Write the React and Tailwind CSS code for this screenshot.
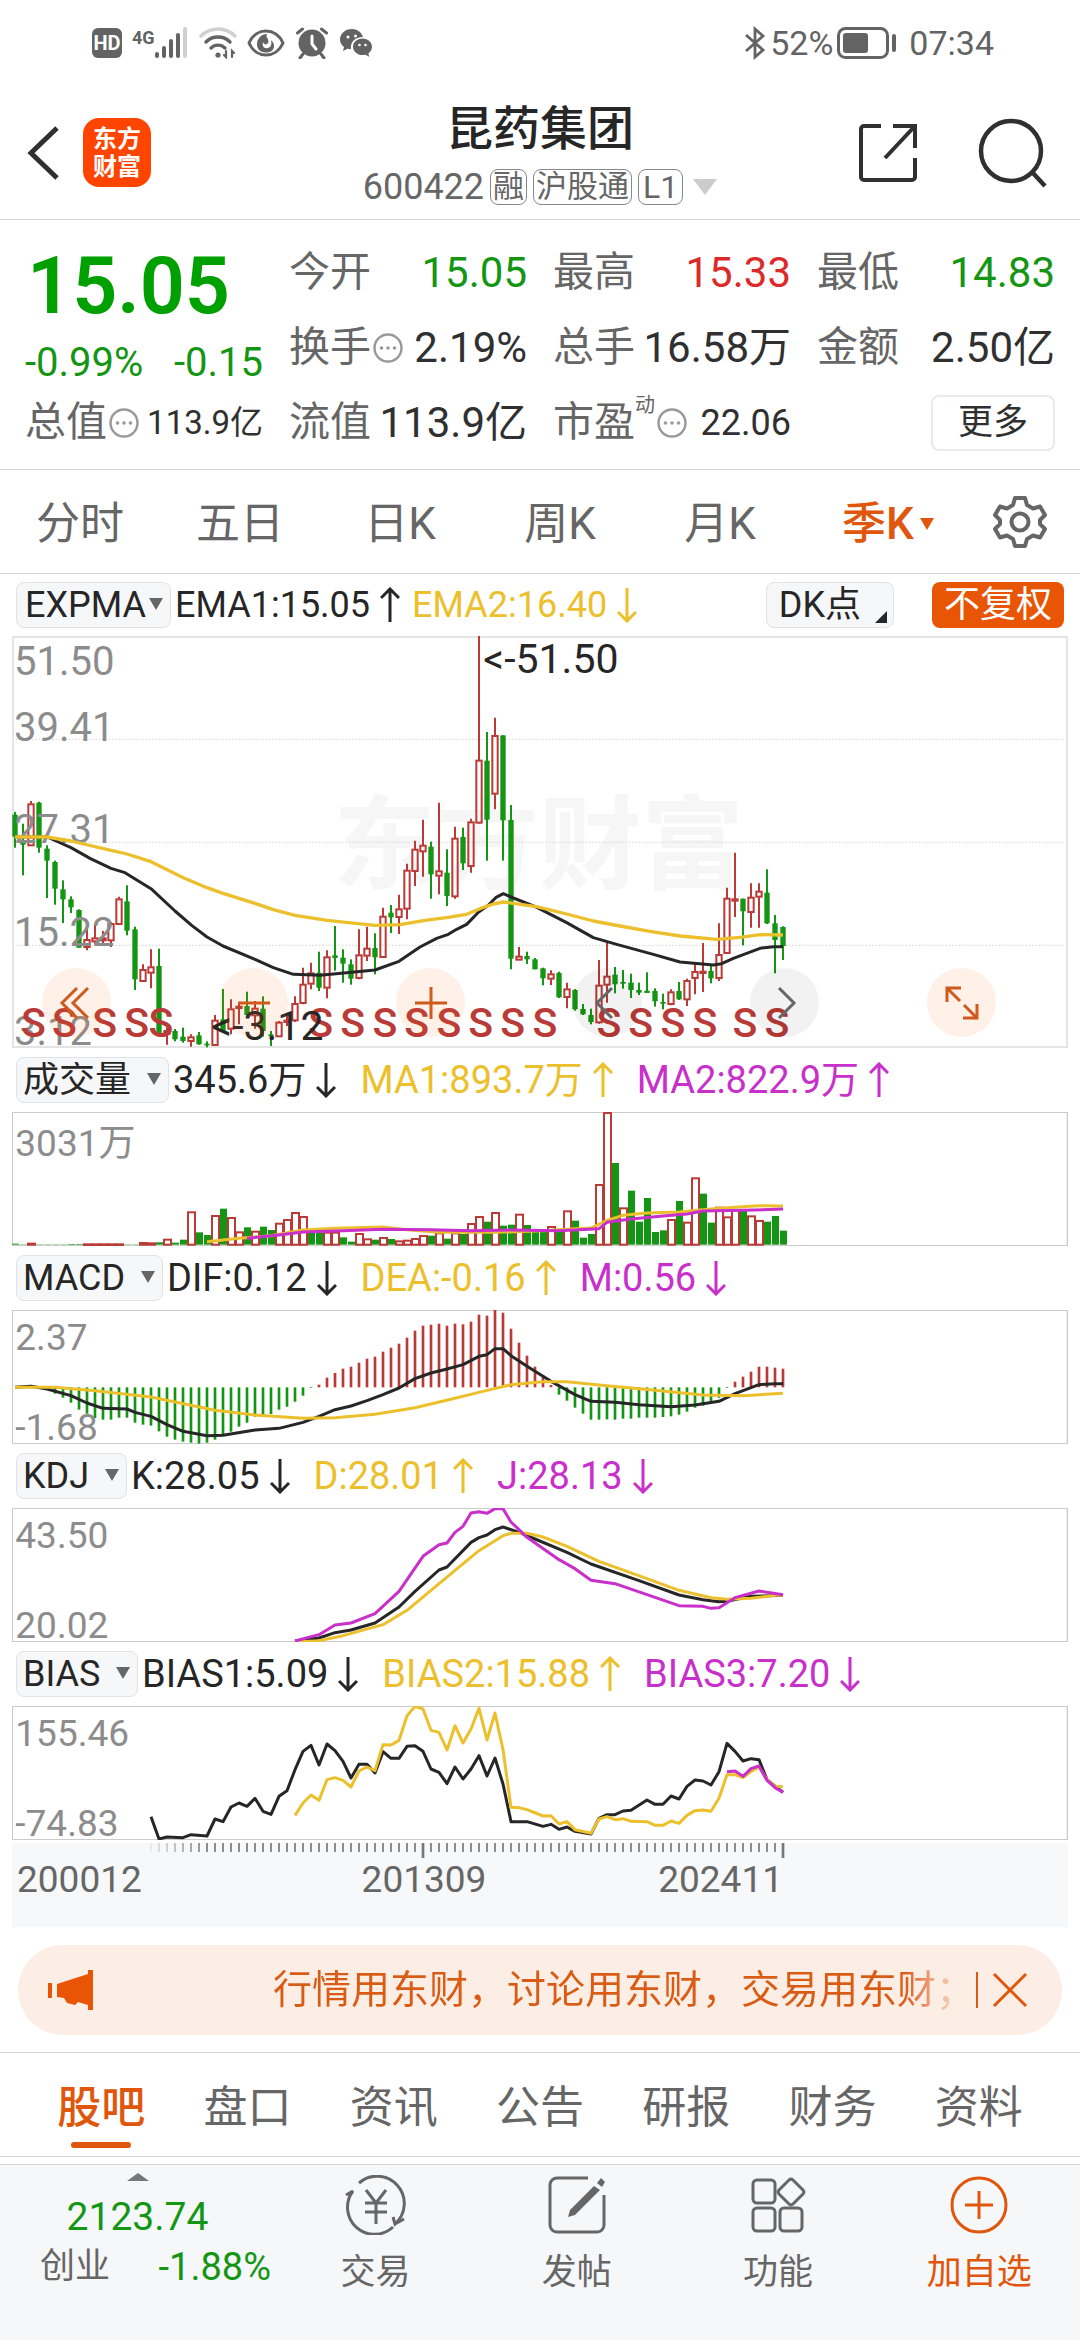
import React from 'react';

const UP = '#b93a36';
const DOWN = '#149614';
const INK = '#262626';
const YELLOW = '#ecc02c';
const MAGENTA = '#c92fcb';

// One slot per quarter. Chart units are thirds of a CSS pixel.
const STEP = 24;
const slotX = (i) => 9 + i * STEP;

// [high, body top, body bottom, low, direction]
const CANDLES = [
  [548, 556, 622, 655, 0], [583, 638, 646, 738, 0], [515, 523, 650, 650, 1], [517, 520, 655, 670, 0],
  [648, 658, 694, 806, 0], [694, 698, 778, 826, 0], [753, 780, 810, 881, 0], [801, 810, 834, 851, 0],
  [840, 842, 955, 955, 0], [895, 930, 955, 963, 1], [885, 925, 938, 945, 1], [905, 925, 935, 950, 1],
  [878, 882, 935, 953, 1], [802, 808, 886, 886, 1], [768, 816, 904, 918, 0], [892, 900, 1050, 1082, 0],
  [1005, 1020, 1057, 1057, 1], [960, 1012, 1032, 1077, 1], [958, 1010, 1213, 1213, 0], [1195, 1203, 1215, 1246, 1],
  [1199, 1205, 1230, 1236, 0], [1195, 1222, 1235, 1240, 0], [1215, 1222, 1237, 1252, 1], [1208, 1218, 1245, 1246, 0],
  [1236, 1243, 1248, 1254, 0], [1157, 1172, 1249, 1250, 1], [1079, 1170, 1205, 1208, 0], [1110, 1138, 1200, 1215, 1],
  [1118, 1130, 1138, 1185, 1], [1087, 1130, 1157, 1166, 0], [1115, 1136, 1160, 1198, 1], [1101, 1138, 1205, 1222, 0],
  [1205, 1215, 1220, 1250, 0], [1175, 1178, 1223, 1223, 1], [1160, 1172, 1180, 1190, 1], [1101, 1122, 1175, 1178, 1],
  [1015, 1064, 1123, 1125, 1], [1000, 1030, 1065, 1080, 1], [967, 1030, 1075, 1085, 0], [963, 982, 1077, 1107, 1],
  [890, 978, 986, 1024, 0], [960, 985, 1003, 1060, 0], [990, 1005, 1048, 1066, 0], [900, 976, 1048, 1050, 1],
  [892, 956, 981, 995, 1], [912, 956, 984, 1035, 0], [835, 860, 985, 986, 1], [827, 850, 864, 911, 0],
  [796, 838, 865, 914, 1], [703, 722, 840, 870, 1], [634, 659, 727, 770, 1], [571, 647, 668, 742, 1],
  [637, 652, 735, 808, 0], [520, 724, 741, 795, 1], [660, 730, 800, 830, 0], [592, 626, 803, 808, 1],
  [595, 623, 702, 722, 0], [568, 577, 712, 730, 1], [20, 392, 582, 583, 1], [308, 394, 571, 694, 0],
  [265, 318, 495, 540, 1], [318, 318, 573, 694, 0], [527, 572, 988, 1020, 0], [953, 980, 993, 993, 1],
  [967, 980, 990, 1004, 0], [986, 990, 1020, 1020, 0], [1015, 1017, 1047, 1068, 0], [1023, 1033, 1050, 1067, 1],
  [1027, 1031, 1104, 1106, 0], [1060, 1078, 1105, 1137, 1], [1079, 1082, 1140, 1144, 0], [1124, 1139, 1155, 1157, 0],
  [1138, 1157, 1178, 1185, 0], [992, 1067, 1181, 1183, 1], [940, 1040, 1068, 1120, 1], [1013, 1036, 1065, 1092, 0],
  [1022, 1058, 1063, 1078, 0], [1033, 1060, 1082, 1106, 0], [1060, 1082, 1090, 1097, 0], [1029, 1084, 1091, 1091, 0],
  [1077, 1085, 1116, 1132, 0], [1093, 1118, 1123, 1140, 0], [1080, 1087, 1126, 1128, 1], [1058, 1085, 1110, 1112, 0],
  [1048, 1053, 1112, 1130, 1], [1000, 1026, 1048, 1095, 1], [941, 1025, 1032, 1088, 1], [1005, 1025, 1047, 1062, 0],
  [882, 975, 1048, 1055, 1], [775, 806, 973, 974, 1], [670, 808, 813, 863, 1], [808, 808, 846, 948, 0],
  [762, 803, 850, 895, 1], [762, 785, 804, 895, 1], [720, 790, 882, 884, 0], [857, 882, 932, 1032, 0],
  [891, 893, 950, 992, 0],
];

const EMA_SLOW =
  '45,623 141,623 213,635 333,663 381,674 453,697 550,745 621,775 669,792 765,822 820,841 885,858 981,873 1125,888 1200,886 1275,873 1345,864 1400,855 1440,838 1480,824 1510,818 1540,822 1610,832 1700,854 1780,875 1860,890 1950,906 2040,920 2150,930 2220,924 2280,916 2349,917';
const EMA_FAST =
  '45,623 141,623 175,638 213,655 270,687 333,717 375,730 420,758 453,778 525,845 575,888 621,923 669,950 765,990 820,1015 880,1035 960,1038 1040,1030 1125,1022 1197,996 1260,953 1310,927 1345,915 1370,900 1400,885 1436,848 1465,828 1487,805 1510,793 1540,806 1606,832 1700,880 1780,925 1850,945 1960,975 2040,998 2140,1007 2165,1003 2200,987 2280,957 2320,952 2349,952';

const SELL_MARKS = [100, 193, 314, 410, 483, 962, 1058, 1155, 1250, 1347, 1442, 1538, 1635, 1827, 1922, 2019, 2115, 2235, 2331];

// Volume bar heights; positive = rising quarter, negative = falling quarter.
const VOLUME = [
  -3, -1, 6, -1, -1, -1, -1, -2, -2, 4, 4, 4, 4, 4, -1, -1, 8, 7, -7, 18, -6, -15, 100, -37, -29, 89, -108, 83, 40, -52,
  42, -54, -44, 66, 77, 98, 86, -37, -35, 39, 39, -22, -9, 35, 19, -15, 23, -17, 13, 15, 20, 29, -27, 37, -18, 37, -32,
  65, 86, -69, 98, -57, -60, 93, -59, -43, -40, 56, -42, 103, -72, -21, -32, 182, 398, -245, 112, -162, -69, -140, -38,
  -43, 77, -131, 69, 202, -153, -66, 114, 85, 107, -105, 88, 74, -69, -86, -42,
];
const VOL_MA1 = [[24, 576], [28, 566], [32, 558], [36, 541], [40, 536], [46, 532], [49, 540], [53, 548], [60, 548], [66, 543], [70, 537], [72, 535], [74, 512], [76, 497], [79, 490], [83, 487], [87, 478], [90, 473], [93, 468], [96, 469]];
const VOL_MA2 = [[29, 566], [33, 556], [36, 547], [41, 543], [46, 539], [52, 540], [57, 543], [62, 541], [68, 543], [73, 537], [74, 518], [77, 508], [81, 499], [84, 493], [86, 484], [91, 482], [96, 478]];

// End of every MACD bar; the zero line is at 413.
const MACD_BARS = [
  413, 413, 409, 411, 418, 432, 444, 459, 480, 492, 505, 510, 510, 504, 504, 519, 525, 528, 545, 561, 570, 576, 579, 582,
  579, 570, 558, 546, 531, 519, 501, 500, 493, 480, 471, 456, 438, 415, 405, 384, 370, 357, 351, 339, 327, 321, 306, 294,
  282, 264, 243, 228, 225, 222, 228, 222, 224, 216, 195, 198, 181, 189, 237, 279, 318, 351, 378, 406, 435, 453, 474, 492,
  510, 510, 509, 510, 507, 507, 504, 504, 504, 502, 500, 495, 486, 474, 468, 456, 444, 415, 396, 381, 366, 351, 351, 354,
  357,
];
const DIF = [[0, 413], [2, 410], [4, 418], [7, 438], [9, 460], [11, 476], [14, 478], [15, 488], [17, 500], [19, 525], [21, 545], [24, 558], [26, 557], [30, 541], [33, 536], [36, 518], [38, 500], [40, 480], [42, 469], [44, 453], [46, 435], [48, 415], [50, 387], [52, 370], [54, 358], [56, 345], [58, 320], [59, 315], [60, 297], [61, 297], [62, 318], [64, 350], [67, 395], [70, 435], [72, 455], [75, 458], [78, 465], [82, 471], [85, 466], [88, 455], [90, 432], [93, 405], [95, 402], [96, 402]];
const DEA = [[0, 413], [5, 413], [10, 423], [17, 442], [25, 482], [30, 496], [36, 506], [40, 504], [45, 494], [50, 474], [55, 446], [59, 422], [62, 405], [66, 396], [69, 396], [73, 406], [80, 422], [86, 436], [91, 438], [96, 431]];

const KDJ_K = [[35, 574], [38, 565], [40, 549], [42, 541], [45, 520], [48, 472], [50, 425], [53, 361], [54, 352], [57, 278], [58, 264], [59, 256], [60, 240], [61, 232], [63, 248], [65, 268], [69, 308], [72, 343], [78, 393], [83, 436], [86, 450], [88, 456], [89, 455], [92, 440], [96, 437]];
const KDJ_D = [[35, 577], [38, 573], [41, 558], [46, 525], [49, 482], [52, 422], [55, 362], [58, 303], [61, 258], [62, 251], [64, 251], [66, 262], [69, 290], [73, 335], [79, 387], [83, 422], [87, 444], [89, 449], [92, 446], [95, 437], [96, 437]];
const KDJ_J = [[35, 574], [38, 555], [40, 526], [42, 520], [45, 492], [48, 425], [51, 320], [53, 285], [54, 280], [55, 248], [56, 230], [57, 190], [58, 186], [59, 191], [60, 177], [61, 177], [62, 217], [64, 263], [68, 330], [70, 357], [72, 392], [75, 402], [79, 435], [83, 468], [86, 470], [87, 476], [88, 474], [90, 444], [93, 424], [96, 435]];

const BIAS1 = [[17, 501], [18, 568], [19, 562], [21, 564], [22, 555], [24, 559], [25, 508], [26, 516], [27, 472], [28, 460], [29, 470], [30, 446], [31, 485], [32, 494], [33, 440], [34, 423], [35, 360], [36, 305], [37, 287], [38, 346], [39, 283], [40, 303], [41, 335], [42, 385], [43, 344], [44, 344], [45, 370], [46, 306], [47, 326], [48, 326], [49, 290], [50, 288], [51, 305], [52, 358], [53, 368], [54, 402], [55, 352], [56, 388], [57, 358], [58, 318], [59, 379], [60, 325], [61, 403], [62, 516], [64, 516], [66, 530], [67, 524], [68, 539], [69, 532], [70, 545], [72, 553], [73, 506], [74, 495], [75, 495], [76, 484], [77, 482], [79, 451], [80, 464], [81, 464], [82, 439], [83, 448], [84, 410], [85, 391], [86, 394], [87, 406], [88, 366], [89, 281], [90, 305], [91, 334], [92, 327], [93, 330], [94, 390], [96, 428]];
const BIAS2 = [[35, 497], [36, 460], [37, 436], [38, 452], [39, 390], [40, 384], [41, 392], [42, 412], [43, 364], [44, 352], [45, 363], [46, 285], [47, 286], [48, 272], [49, 198], [50, 170], [51, 178], [52, 242], [53, 248], [54, 301], [55, 228], [56, 280], [57, 238], [58, 176], [59, 271], [60, 190], [61, 300], [62, 473], [63, 474], [64, 480], [66, 499], [67, 498], [68, 523], [69, 516], [70, 540], [72, 551], [73, 508], [74, 501], [75, 510], [76, 507], [77, 515], [79, 516], [80, 527], [81, 527], [82, 514], [83, 521], [84, 497], [85, 483], [86, 481], [87, 485], [88, 446], [89, 375], [90, 375], [91, 384], [92, 366], [93, 352], [94, 390], [95, 410], [96, 411]];
const BIAS3 = [[89, 366], [90, 364], [91, 380], [92, 357], [93, 349], [94, 392], [95, 414], [96, 428]];

function Trace({ data, top, color }) {
  const points = data.map(([i, y]) => `${slotX(i)},${y - top}`).join(' ');
  return <polyline points={points} fill="none" stroke={color} strokeWidth="9" strokeLinejoin="round" />;
}

function Arrow({ up, className }) {
  return (
    <svg viewBox="0 0 20 36" className={`h-9 w-5 shrink-0 ${className}`} fill="none" stroke="currentColor" strokeWidth="3">
      {up ? <path d="M10 35V2M1 11l9-9 9 9" /> : <path d="M10 1v33M1 25l9 9 9-9" />}
    </svg>
  );
}

function Triangle({ className }) {
  return (
    <svg viewBox="0 0 14 11" className={className} fill="currentColor" preserveAspectRatio="none" aria-hidden="true">
      <path d="M0 0h14L7 11z" />
    </svg>
  );
}

function Picker({ name, compact }) {
  return (
    <label className="relative block shrink-0 text-[#666]">
      <select
        aria-label={name}
        className={`block h-[46px] appearance-none rounded-lg border border-[#e0e2e5] bg-[#f6f7f9] text-4xl leading-none text-[#262626] ${
          compact ? 'pl-2 pr-6' : 'pl-1.5 pr-9'
        }`}
      >
        <option>{name}</option>
      </select>
      <Triangle className="pointer-events-none absolute top-4 right-2 h-3 w-3.5" />
    </label>
  );
}

function Reading({ text, up, className }) {
  return (
    <span className={`flex items-center whitespace-nowrap ${className}`}>
      {text}
      <Arrow up={up} className="ml-2.5" />
    </span>
  );
}

function SubHeader({ name, values }) {
  const tones = ['text-[#262626]', 'text-[#ecc02c]', 'text-[#c92fcb]'];
  return (
    <div className="flex h-16 items-center gap-1 pl-1 text-[38px] leading-none">
      <Picker name={name} />
      <div className="flex gap-6">
        {values.map(([text, up], i) => (
          <Reading key={text} text={text} up={up} className={tones[i]} />
        ))}
      </div>
    </div>
  );
}

function SubChart({ label, labels, children }) {
  return (
    <svg viewBox="0 0 3168 402" className="block w-full" role="img" aria-label={label}>
      <rect x="1" y="1" width="3165" height="400" fill="none" stroke="#cbcbcb" strokeWidth="4" />
      {children}
      <g fill="#8c8c8c" fontSize="111">
        {labels.map((t, i) => (
          <text key={t} x="10" y={labels.length === 1 ? 131 : i === 0 ? 119 : 390}>{t}</text>
        ))}
      </g>
    </svg>
  );
}

function PriceChart() {
  return (
    <svg viewBox="36 20 3168 1236" className="block w-full" role="img" aria-label="季K线图">
      <text x="1000" y="756" fontSize="308" fontWeight="700" fill="#f6f6f6">东方财富</text>
      <g stroke="#dedede" strokeWidth="4" strokeDasharray="5 5">
        <path d="M36 330H3204M36 639H3204M36 948H3204" />
      </g>
      <rect x="39" y="23" width="3162" height="1230" fill="none" stroke="#e4e4e4" strokeWidth="6" />
      {CANDLES.map(([hi, top, bottom, lo, up], i) => {
        const x = 45 + i * STEP;
        return up ? (
          <g key={i} stroke={UP} strokeWidth="6" fill="none">
            <path d={`M${x} ${hi}V${top}M${x} ${bottom}V${lo}`} />
            <rect x={x - 8} y={top + 2} width="16" height={Math.max(bottom - top - 4, 4)} />
          </g>
        ) : (
          <g key={i} fill={DOWN}>
            <rect x={x - 3} y={hi} width="6" height={lo - hi} />
            <rect x={x - 8} y={top} width="16" height={bottom - top} />
          </g>
        );
      })}
      <g fill="#8c8c8c" fontSize="120">
        <text x="42" y="138">51.50</text>
        <text x="42" y="334">39.41</text>
        <text x="42" y="641">27.31</text>
        <text x="42" y="950">15.22</text>
        <text x="42" y="1248">3.12</text>
      </g>
      <polyline points={EMA_FAST} fill="none" stroke={INK} strokeWidth="9" strokeLinejoin="round" />
      <polyline points={EMA_SLOW} fill="none" stroke={YELLOW} strokeWidth="10" strokeLinejoin="round" />
      <g fill={UP} fontSize="123" fontWeight="500" textAnchor="middle">
        {SELL_MARKS.map((x) => (
          <text key={x} x={x} y="1223">S</text>
        ))}
      </g>
      <g fill={INK} fontSize="123">
        <text x="1450" y="132">&lt;-51.50</text>
        <text x="634" y="1232">&lt;-3.12</text>
      </g>
    </svg>
  );
}

function RoundTool({ label, muted, children }) {
  return (
    <button
      aria-label={label}
      className={`flex size-[69px] items-center justify-center rounded-full ${
        muted ? 'bg-black/5 text-[#666]' : 'bg-[#ff6a1a]/10 text-[#d05a1c]'
      }`}
    >
      <svg viewBox="0 0 36 36" className="size-9" fill="none" stroke="currentColor" strokeWidth="3">
        {children}
      </svg>
    </button>
  );
}

function Dots() {
  return (
    <svg viewBox="0 0 30 30" className="ml-0.5 size-[30px] shrink-0 text-[#999]" aria-label="说明">
      <circle cx="15" cy="15" r="13.5" fill="none" stroke="currentColor" strokeWidth="2.4" />
      <g fill="currentColor">
        <circle cx="8.5" cy="15" r="1.8" />
        <circle cx="15" cy="15" r="1.8" />
        <circle cx="21.5" cy="15" r="1.8" />
      </g>
    </svg>
  );
}

function Stat({ label, value, tone = 'text-[#303030]', size = 'text-[42px]', info, note }) {
  return (
    <div className="flex h-[75px] items-center justify-between whitespace-nowrap leading-none">
      <span className="flex items-center text-[#666]">
        <span className="text-[41px]">{label}</span>
        {note && <span className="mb-9 text-xl">{note}</span>}
        {info && <Dots />}
      </span>
      <span className={`${size} ${tone}`}>{value}</span>
    </div>
  );
}

function StatusBar() {
  return (
    <div className="flex h-[86px] items-center justify-between pl-[92px] pr-[86px] text-[#636363]">
      <div className="flex items-center gap-2.5">
        <span className="flex h-[30px] w-[30px] items-center justify-center rounded-md bg-[#636363] text-xl font-bold leading-none text-white">HD</span>
        <span className="flex items-end">
          <span className="mb-3 text-lg font-bold leading-none">4G</span>
          <svg viewBox="0 0 34 32" className="h-8 w-[34px]" fill="currentColor">
            <rect x="0" y="25" width="4" height="6" rx="2" />
            <rect x="7" y="19" width="4" height="12" rx="2" />
            <rect x="14" y="12" width="4" height="19" rx="2" />
            <rect x="21" y="6" width="4" height="25" rx="2" />
            <rect x="28" y="0" width="4" height="31" rx="2" opacity=".3" />
          </svg>
        </span>
        <svg viewBox="0 0 38 32" className="h-8 w-[38px]" fill="none" stroke="currentColor" strokeWidth="3.4" strokeLinecap="round">
          <path d="M2 9a24 24 0 0 1 34 0" opacity=".3" />
          <path d="M7 15a17 17 0 0 1 24 0" />
          <path d="M12 21a10 10 0 0 1 14 0" />
          <circle cx="19" cy="28" r="2.6" fill="currentColor" stroke="none" />
          <path d="M27 24v6l-2-2M33 30v-6l2 2" strokeWidth="2.2" />
        </svg>
        <svg viewBox="0 0 38 28" className="h-7 w-[38px]" fill="none" stroke="currentColor" strokeWidth="3">
          <path d="M2 14C9-2 29-2 36 14 29 30 9 30 2 14z" />
          <path d="M20 5c-2 4 3 5 1 9-1 2-4 2-5-1-1 4 1 7 5 6 3-1 4-4 3-8 5 4 4 12-4 12.500C13 24 10 20 10 15c0-5 4-10 10-10z" fill="currentColor" stroke="none" />
        </svg>
        <svg viewBox="0 0 34 32" className="h-8 w-[34px]" fill="none" stroke="currentColor" strokeWidth="3" strokeLinecap="round">
          <circle cx="17" cy="16" r="13.500" fill="currentColor" stroke="none" />
          <path d="M2.500 6l5-4M31.500 6l-5-4M8 27l-3 4M26 27l3 4" />
          <path d="M17 9v8l4 5" stroke="#fff" />
        </svg>
        <svg viewBox="0 0 34 30" className="h-[30px] w-[34px]" fill="currentColor">
          <path d="M13 1C6 1 1 6 1 11.500c0 3 1.500 5.500 4 7.500l-1 4 4.500-2.300 3.500.6C11 14 16 9 24 9 22.500 4 18 1 13 1z" />
          <path d="M23.500 10.500c-5.500 0-9.500 3.800-9.500 8.300s4 8.300 9.500 8.300l3-.4 3.700 2-.8-3.300c2.200-1.700 3.600-4 3.600-6.600 0-4.500-4-8.300-9.500-8.300z" />
          <g fill="#fff">
            <circle cx="9" cy="9" r="1.500" />
            <circle cx="16.500" cy="8" r="1.500" />
            <circle cx="20.500" cy="17" r="1.300" />
            <circle cx="26.500" cy="17" r="1.300" />
          </g>
        </svg>
      </div>
      <div className="flex items-center text-[34px] leading-none">
        <svg viewBox="0 0 22 34" className="mr-1 h-[34px] w-[22px]" fill="none" stroke="currentColor" strokeWidth="2.800">
          <path d="M2 9l17 15-8 7V3l8 7L2 25" />
        </svg>
        52%
        <svg viewBox="0 0 60 32" className="ml-1 mr-3 h-8 w-[60px]" fill="none" stroke="currentColor" strokeWidth="3">
          <rect x="1.500" y="1.500" width="49" height="29" rx="7" />
          <rect x="6" y="6" width="25" height="20" rx="3" fill="currentColor" stroke="none" />
          <path d="M57 9v14" strokeWidth="4" strokeLinecap="round" />
        </svg>
        07:34
      </div>
    </div>
  );
}

function Header() {
  return (
    <header className="grid h-[134px] grid-cols-[1fr_auto_1fr] items-center border-b border-[#d6d6d6]">
      <div className="flex items-center gap-6 pl-[27px]">
        <button aria-label="返回">
          <svg viewBox="0 0 32 54" className="h-[54px] w-8" fill="none" stroke="#303030" strokeWidth="5">
            <path d="M30 2L4 27l26 25" />
          </svg>
        </button>
        <div className="flex h-[69px] w-[68px] flex-col items-center justify-center rounded-2xl bg-[#ff4400] text-2xl font-bold leading-7 text-white">
          <span>东方</span>
          <span>财富</span>
        </div>
      </div>
      <div className="flex flex-col items-center gap-3">
        <h1 className="text-[47px] font-medium leading-[56px] text-[#262626]">昆药集团</h1>
        <button className="flex items-center gap-1.5 text-[32px] leading-none text-[#666]">
          <span className="text-4xl leading-9">600422</span>
          <span className="flex h-9 items-center rounded-lg border border-[#888] px-0.5 text-[31px]">融</span>
          <span className="flex h-9 items-center rounded-lg border border-[#888] px-0.5 text-[31px]">沪股通</span>
          <span className="flex h-9 items-center rounded-lg border border-[#888] px-1">L1</span>
          <Triangle className="ml-1 h-4 w-6 text-[#ccc]" />
        </button>
      </div>
      <div className="flex items-center justify-end gap-[60px] pr-8">
        <button aria-label="分享">
          <svg viewBox="0 0 60 60" className="size-[60px]" fill="none" stroke="#303030" strokeWidth="4">
            <path d="M23 3H6a3 3 0 0 0-3 3v48a3 3 0 0 0 3 3h48a3 3 0 0 0 3-3V35M35 3h22v22M57 3L27 35" />
          </svg>
        </button>
        <button aria-label="搜索">
          <svg viewBox="0 0 70 70" className="size-[70px]" fill="none" stroke="#303030" strokeWidth="4.500">
            <circle cx="33" cy="33" r="30" />
            <path d="M54 54l13 14" />
          </svg>
        </button>
      </div>
    </header>
  );
}

function Quote() {
  return (
    <section className="grid h-[250px] grid-cols-4 gap-x-[26px] border-b border-[#d6d6d6] px-[25px] pt-[15px]">
      <div>
        <div className="flex h-[150px] flex-col pt-1.5">
          <div className="pl-0.5 text-[79px] font-semibold leading-[90px] text-[#00a000]">15.05</div>
          <div className="flex justify-between whitespace-nowrap pt-3 text-[40px] leading-none text-[#149614]">
            <span>-0.99%</span>
            <span>-0.15</span>
          </div>
        </div>
        <Stat label="总值" value="113.9亿" size="text-[33px]" info />
      </div>
      <div>
        <Stat label="今开" value="15.05" tone="text-[#149614]" />
        <Stat label="换手" value="2.19%" info />
        <Stat label="流值" value="113.9亿" />
      </div>
      <div>
        <Stat label="最高" value="15.33" tone="text-[#dc2a2a]" />
        <Stat label="总手" value="16.58万" />
        <Stat label="市盈" value="22.06" size="text-4xl" info note="动" />
      </div>
      <div>
        <Stat label="最低" value="14.83" tone="text-[#149614]" />
        <Stat label="金额" value="2.50亿" />
        <div className="flex h-[75px] items-center justify-end">
          <button className="h-14 w-[124px] rounded-lg border-2 border-[#e8eaec] text-[35px] leading-none text-[#303030]">更多</button>
        </div>
      </div>
    </section>
  );
}

function PeriodTabs() {
  return (
    <nav className="flex h-[104px] items-center border-b border-[#d6d6d6] text-[44px] leading-none text-[#666]">
      {['分时', '五日', '日K', '周K', '月K'].map((t) => (
        <button key={t} className="w-4/27 pt-1">{t}</button>
      ))}
      <button className="flex w-4/27 items-center justify-center gap-1.5 pt-1 pl-4 font-medium text-[#e0560c]">
        季K
        <Triangle className="h-3 w-3.5" />
      </button>
      <button aria-label="设置" className="flex flex-1 justify-center">
        <svg viewBox="0 0 54 54" className="size-[54px]" fill="none" stroke="currentColor" strokeWidth="4" strokeLinejoin="round">
          <path d="M22 3h10l2 7 6 3.500 7-2 5 8.500-5 5v4l5 5-5 8.500-7-2-6 3.500-2 7H22l-2-7-6-3.500-7 2L2 34l5-5v-4l-5-5 5-8.500 7 2 6-3.500z" />
          <circle cx="27" cy="27" r="8.500" />
        </svg>
      </button>
    </nav>
  );
}

function Charts() {
  return (
    <section className="px-3">
      <div className="flex h-[62px] items-center gap-1 pl-1 pr-1 text-4xl leading-none">
        <Picker name="EXPMA" compact />
        <div className="flex gap-3">
          <Reading text="EMA1:15.05" up className="text-[#262626]" />
          <Reading text="EMA2:16.40" className="text-[#ecc02c]" />
        </div>
        <button className="relative ml-auto h-[46px] rounded-lg border border-[#e0e2e5] bg-[#f6f7f9] pl-3 pr-8 text-[#262626]">
          DK点
          <svg viewBox="0 0 12 12" className="absolute right-1.5 bottom-1 size-3" fill="#262626">
            <path d="M12 0v12H0z" />
          </svg>
        </button>
        <button className="ml-[34px] h-[46px] rounded-lg bg-[#e85504] px-3 text-white">不复权</button>
      </div>

      <div className="relative">
        <PriceChart />
        <div className="absolute inset-x-0 bottom-[11px] flex justify-between pl-[30px] pr-[72px]">
          <RoundTool label="最早">
            <path d="M18 3L3 18l15 15M29 3L14 18l15 15" />
          </RoundTool>
          <RoundTool label="缩小">
            <path d="M2 18h32" />
          </RoundTool>
          <RoundTool label="放大">
            <path d="M2 18h32M18 2v32" />
          </RoundTool>
          <RoundTool label="左移" muted>
            <path d="M22 3L7 18l15 15" />
          </RoundTool>
          <RoundTool label="右移" muted>
            <path d="M12 3l15 15-15 15" />
          </RoundTool>
          <RoundTool label="全屏">
            <path d="M3 17V3h14M3 3l13 13M33 19v14H19M33 33L20 20" />
          </RoundTool>
        </div>
      </div>

      <SubHeader name="成交量" values={[['345.6万', false], ['MA1:893.7万', true], ['MA2:822.9万', true]]} />
      <SubChart label="成交量" labels={['3031万']}>
        {VOLUME.map((v, i) =>
          v > 0 ? (
            <rect key={i} x={slotX(i) - 9} y={401 - v} width="21" height={Math.max(v - 3, 3)} fill="#fff" stroke={UP} strokeWidth="6" />
          ) : (
            <rect key={i} x={slotX(i) - 9} y={398 + v} width="21" height={-v} fill={DOWN} />
          ),
        )}
        <Trace data={VOL_MA1} top={187} color={YELLOW} />
        <Trace data={VOL_MA2} top={187} color={MAGENTA} />
      </SubChart>

      <SubHeader name="MACD" values={[['DIF:0.12', false], ['DEA:-0.16', true], ['M:0.56', false]]} />
      <SubChart label="MACD" labels={['2.37', '-1.68']}>
        {MACD_BARS.map((end, i) => (
          <path key={i} d={`M${slotX(i)} 232V${end - 181}`} stroke={end < 413 ? UP : DOWN} strokeWidth="8" />
        ))}
        <Trace data={DIF} top={181} color={INK} />
        <Trace data={DEA} top={181} color={YELLOW} />
      </SubChart>

      <SubHeader name="KDJ" values={[['K:28.05', false], ['D:28.01', true], ['J:28.13', false]]} />
      <SubChart label="KDJ" labels={['43.50', '20.02']}>
        <Trace data={KDJ_K} top={175} color={INK} />
        <Trace data={KDJ_D} top={175} color={YELLOW} />
        <Trace data={KDJ_J} top={175} color={MAGENTA} />
      </SubChart>

      <SubHeader name="BIAS" values={[['BIAS1:5.09', false], ['BIAS2:15.88', true], ['BIAS3:7.20', false]]} />
      <SubChart label="BIAS" labels={['155.46', '-74.83']}>
        <Trace data={BIAS1} top={169} color={INK} />
        <Trace data={BIAS2} top={169} color={YELLOW} />
        <Trace data={BIAS3} top={169} color={MAGENTA} />
      </SubChart>

      <svg viewBox="0 0 3168 252" className="mt-[3px] block w-full bg-[#f7f8fa]" role="img" aria-label="时间轴">
        {Array.from({ length: 80 }, (_, n) => {
          const i = n + 17;
          const major = i === 51 || i === 96;
          return (
            <path
              key={i}
              d={`M${slotX(i)} 0V${major ? 45 : 27}`}
              stroke="#777"
              strokeWidth={major ? 8 : 5}
              opacity={Math.min(1, (n + 1) / 8)}
            />
          );
        })}
        <g fill="#666" fontSize="111">
          <text x="15" y="148">200012</text>
          <text x="1236" y="148" textAnchor="middle">201309</text>
          <text x="2313" y="148" textAnchor="end">202411</text>
        </g>
      </svg>
    </section>
  );
}

function Notice() {
  return (
    <div className="mx-[18px] mt-[18px] flex h-[90px] items-center rounded-full bg-[#fdeee5] pl-[30px] pr-[34px] text-[#d95b14]">
      <svg viewBox="0 0 46 40" className="h-10 w-[46px] shrink-0" fill="#e85504">
        <path d="M0 13h4v15H0zM9 14L40 4V0h5v40h-5v-5l-10-3-3 3-8-2-3-5-7-1z" />
      </svg>
      <p className="ml-[179px] min-w-0 flex-1 overflow-hidden whitespace-nowrap bg-linear-to-r from-[#d95b14] from-93% to-[#f7cdb6] bg-clip-text text-[39px] leading-[56px] text-transparent">
        行情用东财，讨论用东财，交易用东财；
      </p>
      <span className="ml-6 h-9 w-0.5 bg-[#d95b14]" />
      <button aria-label="关闭" className="ml-3.5">
        <svg viewBox="0 0 36 36" className="size-9" fill="none" stroke="#e0560c" strokeWidth="3">
          <path d="M2 2l32 32M34 2L2 34" />
        </svg>
      </button>
    </div>
  );
}

function ContentTabs() {
  return (
    <nav className="mt-[17px] flex h-[105px] items-stretch border-y border-[#d6d6d6] px-7 text-[44px] leading-none text-[#666]">
      <button className="relative flex-1 pt-1.5 font-medium text-[#e0560c]">
        股吧
        <span className="absolute inset-x-0 bottom-2 mx-auto h-1.5 w-[60px] rounded-full bg-[#e0560c]" />
      </button>
      {['盘口', '资讯', '公告', '研报', '财务', '资料'].map((t) => (
        <button key={t} className="flex-1 pt-1.5">{t}</button>
      ))}
    </nav>
  );
}

function NavItem({ label, accent, children }) {
  return (
    <button className={`flex flex-1 flex-col items-center gap-4 pt-2.5 text-[35px] leading-[44px] ${accent ? 'text-[#e0560c]' : 'text-[#666]'}`}>
      <svg viewBox="0 0 66 60" className="h-[60px] w-[66px]" fill="none" stroke="currentColor" strokeWidth="3">
        {children}
      </svg>
      {label}
    </button>
  );
}

function BottomBar() {
  return (
    <footer className="mt-[7px] flex min-h-[176px] grow items-start border-t border-[#cfd5da] bg-[#f6f7f9]">
      <button className="flex w-[275px] flex-col items-center pt-2 leading-none text-[#149614]">
        <svg viewBox="0 0 22 8" className="h-2 w-[22px]" fill="#777">
          <path d="M0 8L11 0l11 8z" />
        </svg>
        <span className="mt-3.5 text-[39px] leading-[44px]">2123.74</span>
        <span className="flex w-full items-center justify-between pl-10 pr-1 pt-2 text-[38px] leading-10">
          <span className="text-[35px] text-[#666]">创业</span>
          <span>-1.88%</span>
        </span>
      </button>
      <NavItem label="交易">
        <path d="M16 8a27 27 0 0 1 36 41l-2-7M50 52A27 27 0 0 1 10 16l-7 4M52 49l9-5" />
        <path d="M23 15l10 13 10-13M33 28v21M22 28h22M22 37h22" />
      </NavItem>
      <NavItem label="发帖">
        <path d="M44 3H13a7 7 0 0 0-7 7v40a7 7 0 0 0 7 7h40a7 7 0 0 0 7-7V20" />
        <path d="M50 11l6 4-25 25-7 2 2-7z M53 8l4-5 4 4-3 5z" fill="currentColor" stroke="none" />
      </NavItem>
      <NavItem label="功能">
        <rect x="8" y="5" width="22" height="23" rx="4" />
        <rect x="8" y="33" width="22" height="23" rx="4" />
        <rect x="35" y="33" width="22" height="23" rx="4" />
        <path d="M44 5a3 3 0 0 1 4 0l10 10a3 3 0 0 1 0 4L48 29a3 3 0 0 1-4 0L34 19a3 3 0 0 1 0-4z" />
      </NavItem>
      <NavItem label="加自选" accent>
        <circle cx="33" cy="30" r="27" />
        <path d="M19 30h28M33 16v28" />
      </NavItem>
    </footer>
  );
}

export default function App() {
  return (
    <main className="flex min-h-screen flex-col bg-white font-['Roboto','Noto_Sans_CJK_SC',sans-serif]">
      <StatusBar />
      <Header />
      <Quote />
      <PeriodTabs />
      <Charts />
      <Notice />
      <ContentTabs />
      <BottomBar />
    </main>
  );
}
